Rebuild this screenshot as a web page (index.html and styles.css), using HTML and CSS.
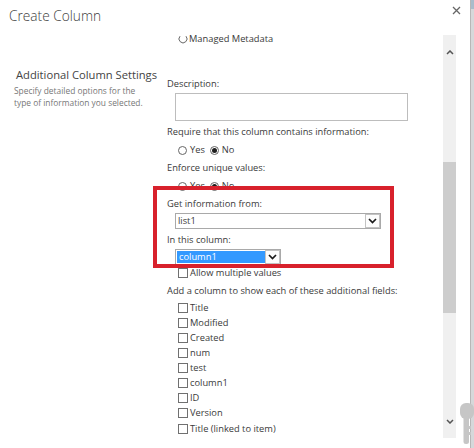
FILE: index.html
```html
<!DOCTYPE html>
<html>
<head>
<meta charset="utf-8">
<title>Create Column</title>
<link rel="stylesheet" href="styles.css">
</head>
<body>
<div class="window">
  <div class="dialog">
    <header class="header">
      <h1 class="title">Create Column</h1>
      <svg class="close" width="9" height="9" viewBox="0 0 9 9"><path d="M1 1L8 8M8 1L1 8" stroke="#666" stroke-width="1.3" fill="none"/></svg>
    </header>
    <div class="body">
      <div class="pane">
        <div class="info">
          <h2 class="info-title">Additional Column Settings</h2>
          <p class="info-text">Specify detailed options for the type of information you selected.</p>
        </div>
        <div class="form">
          <div class="choice">
            <svg class="radio-open" width="10" height="10" viewBox="0 0 10 10"><path d="M2 2.2A4 4 0 1 0 8 2.2" stroke="#666" stroke-width="1" fill="none"/></svg>
            <span>Managed Metadata</span>
          </div>
          <div class="label label-desc">Description:</div>
          <div class="textarea"></div>
          <div class="label label-gap">Require that this column contains information:</div>
          <div class="choice">
            <span class="radio"></span><span>Yes</span>
            <span class="radio radio-on"></span><span>No</span>
          </div>
          <div class="label">Enforce unique values:</div>
          <div class="choice">
            <span class="radio"></span><span>Yes</span>
            <span class="radio radio-on"></span><span>No</span>
          </div>
          <div class="label">Get information from:</div>
          <div class="select select-wide">
            <span class="select-value">list1</span>
            <span class="select-arrow"><svg width="9" height="6" viewBox="0 0 9 6"><path d="M1 1L4.5 4.5L8 1" stroke="#1a1a1a" stroke-width="1.7" fill="none"/></svg></span>
          </div>
          <div class="label label-gap">In this column:</div>
          <div class="select select-narrow">
            <span class="select-value select-hl">column1</span>
            <span class="select-arrow"><svg width="9" height="6" viewBox="0 0 9 6"><path d="M1 1L4.5 4.5L8 1" stroke="#1a1a1a" stroke-width="1.7" fill="none"/></svg></span>
          </div>
          <div class="check-row"><span class="checkbox"></span><span>Allow multiple values</span></div>
          <div class="label label-gap">Add a column to show each of these additional fields:</div>
          <ul class="fields">
            <li class="check-item"><span class="checkbox"></span><span>Title</span></li>
            <li class="check-item"><span class="checkbox"></span><span>Modified</span></li>
            <li class="check-item"><span class="checkbox"></span><span>Created</span></li>
            <li class="check-item"><span class="checkbox"></span><span>num</span></li>
            <li class="check-item"><span class="checkbox"></span><span>test</span></li>
            <li class="check-item"><span class="checkbox"></span><span>column1</span></li>
            <li class="check-item"><span class="checkbox"></span><span>ID</span></li>
            <li class="check-item"><span class="checkbox"></span><span>Version</span></li>
            <li class="check-item"><span class="checkbox"></span><span>Title (linked to item)</span></li>
          </ul>
        </div>
      </div>
      <div class="scrollbar">
        <div class="sb-btn"><svg width="8" height="5" viewBox="0 0 8 5"><path d="M1 4L4 1L7 4" stroke="#555" stroke-width="1.5" fill="none"/></svg></div>
        <div class="sb-track"><div class="sb-thumb"></div></div>
        <div class="sb-btn"><svg width="8" height="5" viewBox="0 0 8 5"><path d="M1 1L4 4L7 1" stroke="#555" stroke-width="1.5" fill="none"/></svg></div>
      </div>
    </div>
    <div class="annotation"></div>
  </div>
  <div class="edge"></div>
  <svg class="key" width="16" height="44" viewBox="0 0 16 44">
    <rect x="2" y="1" width="14" height="16" rx="6" fill="#c6c6c6"/>
    <rect x="5.5" y="14" width="5.5" height="28" rx="2.5" fill="#c6c6c6"/>
    <rect x="10" y="24" width="3" height="3" fill="#c6c6c6"/>
    <rect x="10" y="30" width="3" height="3" fill="#c6c6c6"/>
  </svg>
</div>
</body>
</html>
```
FILE: styles.css
```css
* { box-sizing: border-box; }
html, body { margin: 0; padding: 0; background: #fff; }
body {
  width: 474px;
  height: 448px;
  overflow: hidden;
  font-family: "Open Sans", "Noto Sans", sans-serif;
  color: #444;
}
.window { display: flex; width: 474px; height: 448px; position: relative; }
.dialog { flex: 1; display: flex; flex-direction: column; position: relative; background: #fff; overflow: hidden; }
.header { height: 30px; flex: none; display: flex; justify-content: space-between; align-items: flex-start; }
.title { margin: 0; padding: 6px 0 0 9px; font-size: 13.7px; font-weight: 300; line-height: 20px; color: #3c3c3c; }
.close { margin: 6px 9px 0 0; }
.body { flex: 1; display: flex; min-height: 0; }
.pane { flex: 1; display: flex; overflow: hidden; }
.info { width: 167px; flex: none; padding: 38px 0 0 14px; }
.info-title { margin: 0 0 0 2px; font-size: 11.2px; font-weight: 400; line-height: 14px; color: #444; }
.info-text { margin: 3px 0 0; width: 135px; font-size: 8.4px; line-height: 12px; color: #777; }
.form { flex: 1; font-size: 9.3px; line-height: 18px; color: #3a3a3a; }
.label { height: 18px; white-space: nowrap; }
.label-desc { margin-top: 27px; }
.label-gap { margin-top: 2px; }
.choice { height: 18px; display: flex; align-items: center; padding-left: 11px; white-space: nowrap; }
.radio-open { margin-right: 1px; }
.radio { width: 9px; height: 9px; border: 1px solid #666; border-radius: 50%; margin-right: 3px; display: flex; align-items: center; justify-content: center; background: #fff; }
.radio-on { margin-left: 5px; }
.radio-on::after { content: ""; width: 5px; height: 5px; border-radius: 50%; background: #1e1e1e; }
.textarea { margin-left: 8px; width: 233px; height: 28px; border: 1px solid #bdbdbd; background: #fff; }
.select { margin-left: 8px; height: 16px; border: 1px solid #a9a9a9; display: flex; background: #fff; }
.select-wide { width: 206px; }
.select-narrow { width: 106px; }
.select-value { flex: 1; padding-left: 2px; line-height: 14px; white-space: nowrap; }
.select-hl { background: #3399ff; color: #fff; margin: 1px 0 1px 1px; line-height: 12px; }
.select-arrow { width: 15px; flex: none; border: 1px solid #c3c3c3; background: #fdfdfd; display: flex; align-items: center; justify-content: center; }
.check-row { height: 15px; display: flex; align-items: center; padding-left: 11px; white-space: nowrap; }
.checkbox { width: 10px; height: 10px; border: 1px solid #707070; background: #fff; margin-right: 2px; flex: none; }
.fields { list-style: none; margin: 0; padding: 0 0 0 11px; }
.check-item { height: 15.125px; display: flex; align-items: center; white-space: nowrap; }
.scrollbar { width: 13px; flex: none; margin: 5px 14px 10px 0; background: #f0f0f0; display: flex; flex-direction: column; }
.sb-btn { height: 34px; flex: none; display: flex; align-items: center; justify-content: center; }
.sb-track { flex: 1; }
.sb-thumb { margin-top: 93px; height: 151px; background: #cdcdcd; }
.annotation { position: absolute; left: 153px; top: 186px; width: 241px; height: 82px; border: 4px solid #d8212c; pointer-events: none; }
.edge { width: 4px; flex: none; background: linear-gradient(#a9bccb 0, #a9bccb 9px, #d6d8da 9px); border-left: 1px solid #b7b7b7; }
.key { position: absolute; left: 458px; top: 402px; }
```
